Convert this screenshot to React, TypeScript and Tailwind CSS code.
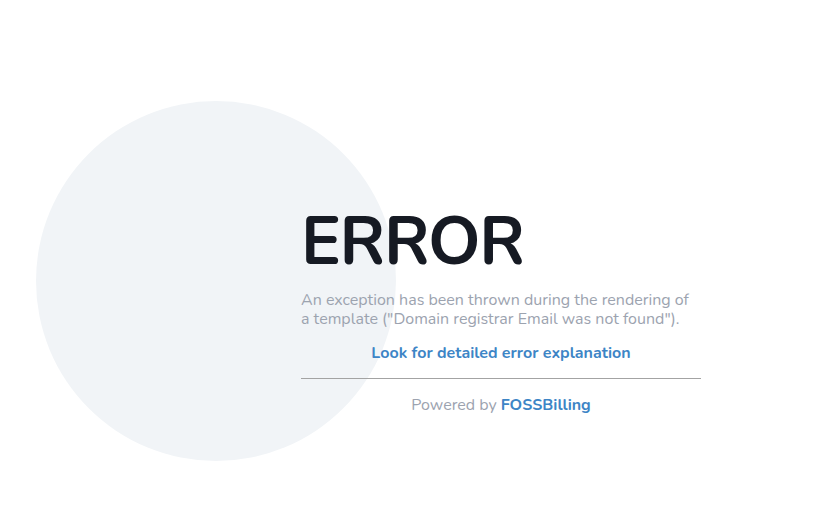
export default function App() {
  return (
    <main className="relative min-h-screen w-full overflow-hidden bg-white font-['Nunito','Noto_Sans',sans-serif]">
      {/* decorative circle behind the message */}
      <div className="absolute left-[36px] top-[101px] h-[360px] w-[360px] rounded-full bg-[#f1f4f7]" />

      <div className="relative ml-[301px] w-[400px] pt-[209px]">
        <h1 className="text-[67px] font-bold leading-none tracking-[-1.5px] text-[#161a23]">ERROR</h1>
        <p className="mt-[15px] text-[16px] leading-[19px] text-[#9ca3af]">
          An exception has been thrown during the rendering of a template ("Domain registrar Email was not found").
        </p>
        <div className="mt-[12px] text-center">
          <a href="#" className="text-[16px] font-bold text-[#3d85c6]">
            Look for detailed error explanation
          </a>
        </div>
        <hr className="mt-[13px] border-t border-[#a3a3a3]" />
        <p className="mt-[14px] text-center text-[16px] text-[#9ca3af]">
          Powered by <a href="#" className="font-bold text-[#3d85c6]">FOSSBilling</a>
        </p>
      </div>
    </main>
  );
}
